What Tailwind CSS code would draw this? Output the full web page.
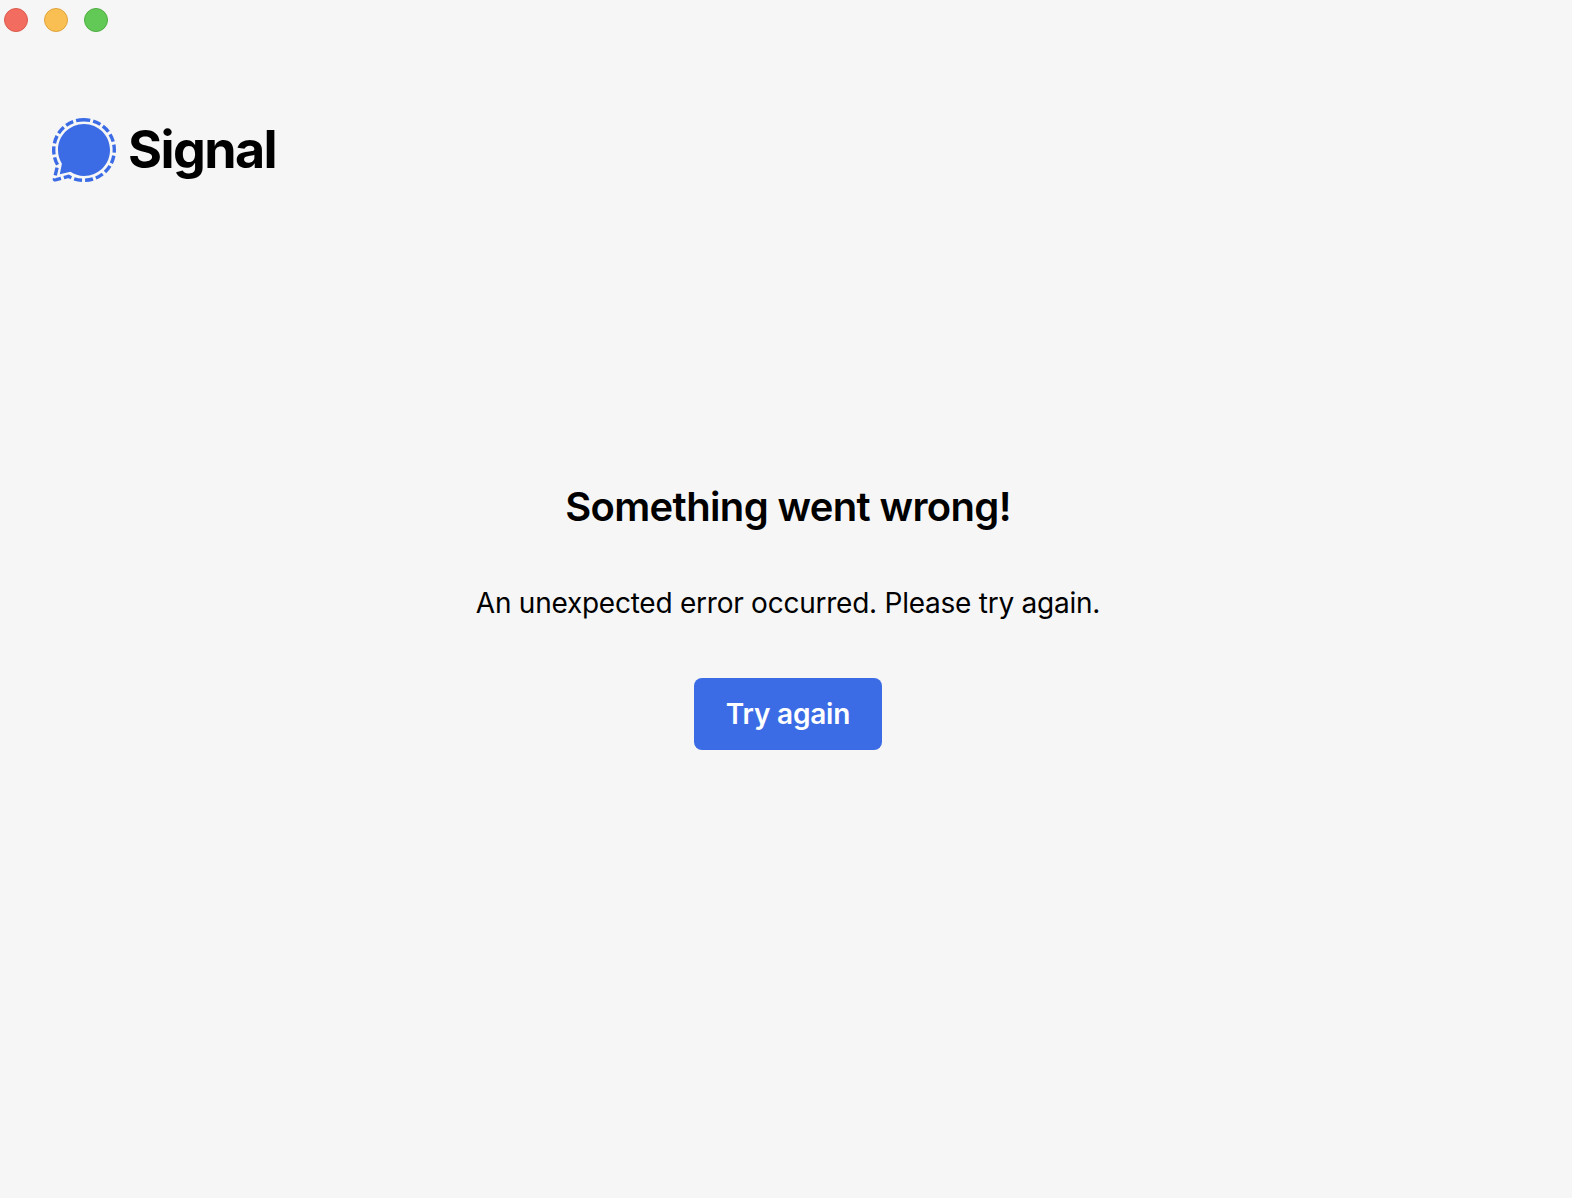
<!DOCTYPE html>
<html lang="en">
<head>
    <meta charset="UTF-8">
    <meta name="viewport" content="width=device-width, initial-scale=1.0">
    <title>Signal</title>
    <script src="https://cdn.jsdelivr.net/npm/@tailwindcss/browser@4"></script>
</head>
<body class="min-h-screen bg-[#f6f6f6] text-black font-['Inter',sans-serif]">
    <!-- window controls -->
    <div class="flex gap-4 pl-1 pt-2">
        <span class="w-6 h-6 rounded-full bg-[#f26d60] border border-[#dc5a4e]"></span>
        <span class="w-6 h-6 rounded-full bg-[#f9bf52] border border-[#e0a63f]"></span>
        <span class="w-6 h-6 rounded-full bg-[#63c956] border border-[#50ad44]"></span>
    </div>

    <!-- logo -->
    <div class="flex items-center gap-3 pl-[52px] mt-[86px]">
        <svg class="w-16 h-16" viewBox="0 0 64 64" fill="none">
            <path d="M32 6C17.600 6 6 17.600 6 32c0 5 1.400 9.700 3.900 13.700L7.800 56.200l10.600-2.400C22.300 56.500 27 58 32 58c14.400 0 26-11.600 26-26S46.400 6 32 6z" fill="#3b6ce6"/>
            <path d="M32 1.700C15 1.700 1.700 15 1.700 32c0 5.500 1.400 10.600 4 15L2.400 60.800c-.2.800.3 1.200 1 1l13-3.500C21 61 26.300 62.300 32 62.300 49 62.300 62.300 49 62.300 32S49 1.700 32 1.700z" stroke="#3b6ce6" stroke-width="3.400" stroke-dasharray="8 3" stroke-linejoin="round"/>
        </svg>
        <span class="text-[52px] leading-[64px] font-bold tracking-[-1.6px]">Signal</span>
    </div>

    <!-- error message -->
    <main class="flex flex-col items-center pl-1 mt-[297px]">
        <h1 class="text-[40px] leading-[56px] font-semibold tracking-[-0.65px]">Something went wrong!</h1>
        <p class="mt-[48px] text-[28px] leading-[40px] tracking-[-0.24px]">An unexpected error occurred. Please try again.</p>
        <button class="mt-[55px] w-[188px] h-[72px] rounded-lg bg-[#3b6ce6] text-white text-[28px] font-semibold tracking-[-0.2px]">Try again</button>
    </main>
</body>
</html>
